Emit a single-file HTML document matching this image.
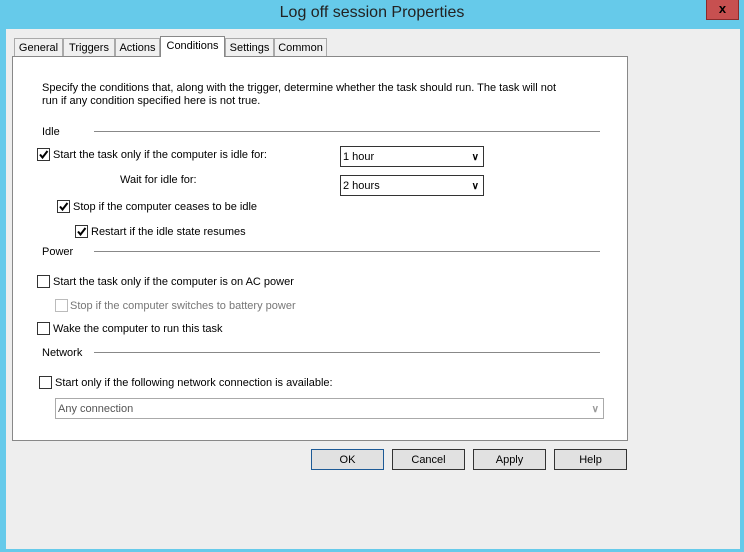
<!DOCTYPE html>
<html><head><style>
*{margin:0;padding:0;box-sizing:border-box}
body{width:744px;height:552px;background:#66caea;font-family:"Liberation Sans",sans-serif;font-size:11px;color:#000;position:relative;overflow:hidden}
.a{position:absolute}
.title{left:0;width:744px;top:4px;text-align:center;font-size:16px;color:#222}
.close{left:706px;top:0;width:33px;height:20px;background:#c75050;border:1px solid #8a2b2b;border-top:none;color:#000;font-weight:bold;font-size:13px;text-align:center;line-height:17px}
.client{left:6px;top:29px;width:734px;height:520px;background:#eeeeee}
.tab{top:38px;height:19px;border:1px solid #aaa;border-bottom:none;background:#f0f0f0;text-align:center;line-height:19px}
.sel{top:36px;height:21px;background:#fff;border-color:#888;z-index:2;line-height:19px}
.panel{left:12px;top:56px;width:616px;height:385px;background:#fff;border:1px solid #888}
.cb{width:13px;height:13px;border:1px solid #333;background:#fff}
.cb.dis{border-color:#bbb}
.cb svg{position:absolute;left:0;top:0}
.line{height:1px;background:#888}
.dd{background:#fff;border:1px solid #333;height:21px;line-height:21px;padding-left:2px}
.dd .ch{position:absolute;right:4px;top:0;font-size:10px;font-weight:bold}
.btn{top:449px;width:73px;height:21px;background:#e1e1e1;border:1px solid #333;text-align:center;line-height:20px}
.dim{color:#777}
</style></head><body>
<div class="a title">Log off session Properties</div>
<div class="a close">x</div>
<div class="a client"></div>
<div class="a tab" style="left:14px;width:49px">General</div>
<div class="a tab" style="left:63px;width:52px">Triggers</div>
<div class="a tab" style="left:115px;width:45px">Actions</div>
<div class="a tab sel" style="left:160px;width:65px">Conditions</div>
<div class="a tab" style="left:225px;width:49px">Settings</div>
<div class="a tab" style="left:274px;width:53px">Common</div>
<div class="a panel"></div>
<div class="a" style="left:42px;top:82px;width:525px;line-height:13px">Specify the conditions that, along with the trigger, determine whether the task should run. The task will not run if any condition specified here is not true.</div>
<div class="a" style="left:42px;top:126px">Idle</div><div class="a line" style="left:94px;top:131px;width:506px"></div>
<div class="a cb" style="left:37px;top:148px"><svg width="11" height="11"><path d="M2 5.5L4.5 8.5L9.5 2" stroke="#000" stroke-width="2" fill="none"/></svg></div>
<div class="a" style="left:53px;top:149px">Start the task only if the computer is idle for:</div>
<div class="a" style="left:120px;top:174px">Wait for idle for:</div>
<div class="a dd" style="left:340px;top:146px;width:144px">1 hour<span class="ch">&#8744;</span></div>
<div class="a dd" style="left:340px;top:175px;width:144px">2 hours<span class="ch">&#8744;</span></div>
<div class="a cb" style="left:57px;top:200px"><svg width="11" height="11"><path d="M2 5.5L4.5 8.5L9.5 2" stroke="#000" stroke-width="2" fill="none"/></svg></div>
<div class="a" style="left:73px;top:201px">Stop if the computer ceases to be idle</div>
<div class="a cb" style="left:75px;top:225px"><svg width="11" height="11"><path d="M2 5.5L4.5 8.5L9.5 2" stroke="#000" stroke-width="2" fill="none"/></svg></div>
<div class="a" style="left:91px;top:226px">Restart if the idle state resumes</div>
<div class="a" style="left:42px;top:246px">Power</div><div class="a line" style="left:94px;top:251px;width:506px"></div>
<div class="a cb" style="left:37px;top:275px"></div>
<div class="a" style="left:53px;top:276px">Start the task only if the computer is on AC power</div>
<div class="a cb dis" style="left:55px;top:299px"></div>
<div class="a dim" style="left:70px;top:300px">Stop if the computer switches to battery power</div>
<div class="a cb" style="left:37px;top:322px"></div>
<div class="a" style="left:53px;top:323px">Wake the computer to run this task</div>
<div class="a" style="left:42px;top:347px">Network</div><div class="a line" style="left:94px;top:352px;width:506px"></div>
<div class="a cb" style="left:39px;top:376px"></div>
<div class="a" style="left:55px;top:377px">Start only if the following network connection is available:</div>
<div class="a dd" style="left:55px;top:398px;width:549px;border-color:#aaa;color:#555">Any connection<span class="ch" style="color:#999">&#8744;</span></div>
<div class="a btn" style="left:311px;border-color:#1d5a96">OK</div>
<div class="a btn" style="left:392px">Cancel</div>
<div class="a btn" style="left:473px">Apply</div>
<div class="a btn" style="left:554px">Help</div>
</body></html>
